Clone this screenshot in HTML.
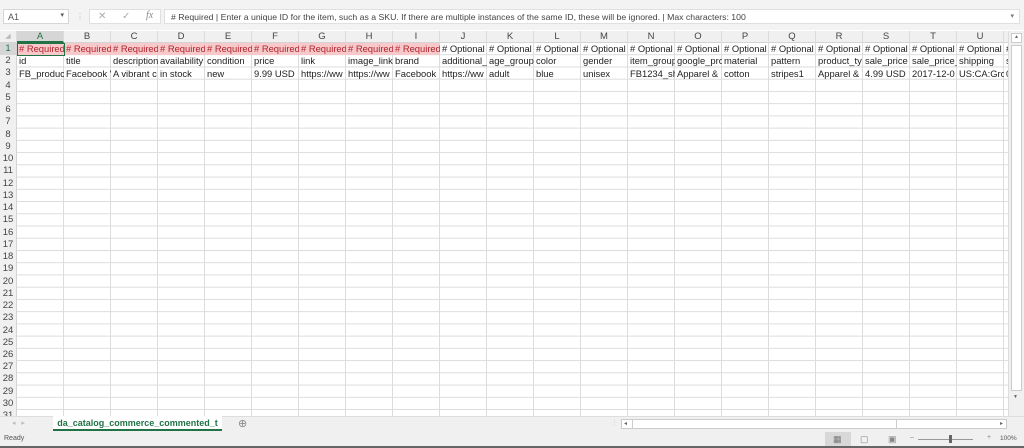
<!DOCTYPE html>
<html><head><meta charset="utf-8"><style>
*{margin:0;padding:0;box-sizing:border-box}
body{width:1024px;height:448px;overflow:hidden;background:#fff;font-family:"Liberation Sans",sans-serif;position:relative;color:#222}
.a{position:absolute}
#top{left:0;top:0;width:1024px;height:30px;background:#f3f3f3}
#nb{left:3px;top:9px;width:66px;height:15px;background:#fff;border:1px solid #d6d6d6;font-size:9px;color:#555;padding:2px 4px}
#nb span{position:absolute;right:4px;top:1px;font-size:7px}
#fx{left:89px;top:9px;width:72px;height:15px;background:#fff;border:1px solid #e0e0e0;font-size:10px;color:#aaa}
#fb{left:164px;top:9px;width:856px;height:15px;background:#fff;border:1px solid #e0e0e0;font-size:8.7px;color:#444;padding:2px 6px;white-space:nowrap}
#ch{left:0;top:31px;width:1008px;height:12px;background:#f0f0f0;border-bottom:1px solid #d4d4d4}
.c{position:absolute;top:0;height:12px;width:47px;text-align:center;font-size:9.5px;color:#444;line-height:12px;border-right:1px solid #dcdcdc}
#rh{left:0;top:43px;width:17px;height:373px;background:#f0f0f0;border-right:1px solid #d4d4d4}
.r{position:absolute;left:0;width:16px;text-align:center;font-size:9.5px;color:#444;height:12.24px;line-height:12.24px}
#grid{left:17px;top:43px;width:991px;height:373px;background-image:linear-gradient(to right,#dcdcdc 1px,transparent 1px),linear-gradient(to bottom,#dcdcdc 1px,transparent 1px);background-size:47px 100%,100% 12.24px;background-position:46px 0,0 11.24px}
#pink{left:17px;top:43px;width:423px;height:12px;background:#f8c9cb}
.t{position:absolute;font-size:9.4px;white-space:nowrap;overflow:hidden;width:47px;height:12px;line-height:12px;padding-left:2px}
.rd{color:#b0232a}
#sel{left:17px;top:43px;width:48px;height:13px;border:1.5px solid #217346}
#vs{left:1008px;top:31px;width:16px;height:385px;background:#f0f0f0;border-left:1px solid #ddd}
#tabs{left:0;top:416px;width:1024px;height:16px;background:#f0f0f0;border-top:1px solid #ddd}
#tab{left:53px;top:416px;width:169px;height:15px;background:#fff;color:#217346;font-weight:bold;font-size:9px;text-align:center;line-height:14px;border-bottom:2px solid #217346}
#hs{left:621px;top:419px;width:386px;height:10px;background:#fff;border:1px solid #ccc}
#st{left:0;top:432px;width:1024px;height:14px;background:#f0f0f0;font-size:7px;color:#555;padding:3px 4px}
#bot{left:0;top:446px;width:1024px;height:2px;background:#666}
</style></head><body>
<div class="a" id="top"></div>
<div class="a" id="nb">A1<span>▾</span></div>
<div class="a" style="left:76px;top:12px;font-size:8px;color:#bbb">⋮</div>
<div class="a" id="fx"><span style="position:absolute;left:8px;top:1px">✕</span><span style="position:absolute;left:32px;top:1px">✓</span><span style="position:absolute;left:56px;top:0;font-style:italic;font-family:'Liberation Serif',serif;color:#888">fx</span></div>
<div class="a" id="fb"># Required | Enter a unique ID for the item, such as a SKU. If there are multiple instances of the same ID, these will be ignored. | Max characters: 100<span style="position:absolute;right:5px;font-size:7px;color:#777">▾</span></div>
<div class="a" id="ch">
<div class="c" style="left:0;width:17px;color:#bbb;font-size:7px">◢</div>
<div class="c" style="left:17px;background:#d6d6d6;color:#217346;border-bottom:2px solid #217346">A</div>
<div class="c" style="left:64px">B</div><div class="c" style="left:111px">C</div><div class="c" style="left:158px">D</div><div class="c" style="left:205px">E</div><div class="c" style="left:252px">F</div><div class="c" style="left:299px">G</div><div class="c" style="left:346px">H</div><div class="c" style="left:393px">I</div><div class="c" style="left:440px">J</div><div class="c" style="left:487px">K</div><div class="c" style="left:534px">L</div><div class="c" style="left:581px">M</div><div class="c" style="left:628px">N</div><div class="c" style="left:675px">O</div><div class="c" style="left:722px">P</div><div class="c" style="left:769px">Q</div><div class="c" style="left:816px">R</div><div class="c" style="left:863px">S</div><div class="c" style="left:910px">T</div><div class="c" style="left:957px">U</div>
</div>
<div class="a" id="grid"></div>
<div class="a" id="pink"></div>
<div class="a" id="rh">
<div class="r" style="top:0;background:#d6d6d6;color:#217346">1</div><div class="r" style="top:12.24px">2</div><div class="r" style="top:24.48px">3</div><div class="r" style="top:36.72px">4</div><div class="r" style="top:48.96px">5</div><div class="r" style="top:61.2px">6</div><div class="r" style="top:73.44px">7</div><div class="r" style="top:85.68px">8</div><div class="r" style="top:97.92px">9</div><div class="r" style="top:110.16px">10</div><div class="r" style="top:122.4px">11</div><div class="r" style="top:134.64px">12</div><div class="r" style="top:146.88px">13</div><div class="r" style="top:159.12px">14</div><div class="r" style="top:171.36px">15</div><div class="r" style="top:183.6px">16</div><div class="r" style="top:195.84px">17</div><div class="r" style="top:208.08px">18</div><div class="r" style="top:220.32px">19</div><div class="r" style="top:232.56px">20</div><div class="r" style="top:244.8px">21</div><div class="r" style="top:257.04px">22</div><div class="r" style="top:269.28px">23</div><div class="r" style="top:281.52px">24</div><div class="r" style="top:293.76px">25</div><div class="r" style="top:306px">26</div><div class="r" style="top:318.24px">27</div><div class="r" style="top:330.48px">28</div><div class="r" style="top:342.72px">29</div><div class="r" style="top:354.96px">30</div><div class="r" style="top:367.2px">31</div>
</div>
<div class="a" style="left:17px;top:43px">
<div class="t rd" style="left:0;top:0"># Required</div><div class="t rd" style="left:47px;top:0"># Required</div><div class="t rd" style="left:94px;top:0"># Required</div><div class="t rd" style="left:141px;top:0"># Required</div><div class="t rd" style="left:188px;top:0"># Required</div><div class="t rd" style="left:235px;top:0"># Required</div><div class="t rd" style="left:282px;top:0"># Required</div><div class="t rd" style="left:329px;top:0"># Required</div><div class="t rd" style="left:376px;top:0"># Required</div>
<div class="t" style="left:423px;top:0"># Optional</div><div class="t" style="left:470px;top:0"># Optional</div><div class="t" style="left:517px;top:0"># Optional</div><div class="t" style="left:564px;top:0"># Optional</div><div class="t" style="left:611px;top:0"># Optional</div><div class="t" style="left:658px;top:0"># Optional</div><div class="t" style="left:705px;top:0"># Optional</div><div class="t" style="left:752px;top:0"># Optional</div><div class="t" style="left:799px;top:0"># Optional</div><div class="t" style="left:846px;top:0"># Optional</div><div class="t" style="left:893px;top:0"># Optional</div><div class="t" style="left:940px;top:0"># Optional</div><div class="t" style="left:987px;top:0;width:4px">#</div>
<div class="t" style="left:0;top:12px">id</div><div class="t" style="left:47px;top:12px">title</div><div class="t" style="left:94px;top:12px">description</div><div class="t" style="left:141px;top:12px">availability</div><div class="t" style="left:188px;top:12px">condition</div><div class="t" style="left:235px;top:12px">price</div><div class="t" style="left:282px;top:12px">link</div><div class="t" style="left:329px;top:12px">image_link</div><div class="t" style="left:376px;top:12px">brand</div><div class="t" style="left:423px;top:12px">additional_</div><div class="t" style="left:470px;top:12px">age_group</div><div class="t" style="left:517px;top:12px">color</div><div class="t" style="left:564px;top:12px">gender</div><div class="t" style="left:611px;top:12px">item_group</div><div class="t" style="left:658px;top:12px">google_pro</div><div class="t" style="left:705px;top:12px">material</div><div class="t" style="left:752px;top:12px">pattern</div><div class="t" style="left:799px;top:12px">product_ty</div><div class="t" style="left:846px;top:12px">sale_price</div><div class="t" style="left:893px;top:12px">sale_price_</div><div class="t" style="left:940px;top:12px">shipping</div><div class="t" style="left:987px;top:12px;width:4px">s</div>
<div class="t" style="left:0;top:24.5px">FB_product</div><div class="t" style="left:47px;top:24.5px">Facebook "</div><div class="t" style="left:94px;top:24.5px">A vibrant c</div><div class="t" style="left:141px;top:24.5px">in stock</div><div class="t" style="left:188px;top:24.5px">new</div><div class="t" style="left:235px;top:24.5px">9.99 USD</div><div class="t" style="left:282px;top:24.5px">https://ww</div><div class="t" style="left:329px;top:24.5px">https://ww</div><div class="t" style="left:376px;top:24.5px">Facebook</div><div class="t" style="left:423px;top:24.5px">https://ww</div><div class="t" style="left:470px;top:24.5px">adult</div><div class="t" style="left:517px;top:24.5px">blue</div><div class="t" style="left:564px;top:24.5px">unisex</div><div class="t" style="left:611px;top:24.5px">FB1234_sh</div><div class="t" style="left:658px;top:24.5px">Apparel &amp;</div><div class="t" style="left:705px;top:24.5px">cotton</div><div class="t" style="left:752px;top:24.5px">stripes1</div><div class="t" style="left:799px;top:24.5px">Apparel &amp;</div><div class="t" style="left:846px;top:24.5px">4.99 USD</div><div class="t" style="left:893px;top:24.5px">2017-12-0</div><div class="t" style="left:940px;top:24.5px">US:CA:Gro</div><div class="t" style="left:987px;top:24.5px;width:4px">0</div>
</div>
<div class="a" id="sel"></div>
<div class="a" id="vs"><div class="a" style="left:2px;top:2px;width:11px;height:10px;background:#fff;border:1px solid #ccc;font-size:5px;text-align:center;color:#666">▲</div><div class="a" style="left:2px;top:14px;width:11px;height:346px;background:#fff;border:1px solid #ccc"></div><div class="a" style="left:4px;top:363px;font-size:5px;color:#666">▼</div></div>
<div class="a" id="tabs"><span style="position:absolute;left:12px;top:2px;font-size:7px;color:#bbb">◂ &nbsp; ▸</span><span style="position:absolute;left:238px;top:0px;font-size:11px;color:#888">⊕</span><span style="position:absolute;left:611px;top:2px;font-size:7px;color:#ccc">⋮</span></div>
<div class="a" id="tab">da_catalog_commerce_commented_t</div>
<div class="a" id="hs"><span style="position:absolute;left:2px;top:0;font-size:6px;color:#666">◂</span><div class="a" style="left:10px;top:0;width:265px;height:8px;border-left:1px solid #ccc;border-right:1px solid #ccc"></div><span style="position:absolute;right:3px;top:0;font-size:6px;color:#666">▸</span></div>
<div class="a" id="st">Ready
<div class="a" style="left:825px;top:0;width:26px;height:14px;background:#d8d8d8"></div>
<span class="a" style="left:833px;top:2px;font-size:9px;color:#777">▦</span><span class="a" style="left:860px;top:2px;font-size:9px;color:#888">▢</span><span class="a" style="left:888px;top:2px;font-size:9px;color:#888">▣</span>
<span class="a" style="left:910px;top:2px;color:#888">–</span><div class="a" style="left:918px;top:7px;width:55px;height:1px;background:#999"></div><div class="a" style="left:949px;top:3px;width:3px;height:8px;background:#666"></div><span class="a" style="left:987px;top:2px;color:#888">+</span><span class="a" style="left:1000px;top:3px;font-size:6.5px">100%</span></div>
<div class="a" id="bot"></div>
</body></html>
